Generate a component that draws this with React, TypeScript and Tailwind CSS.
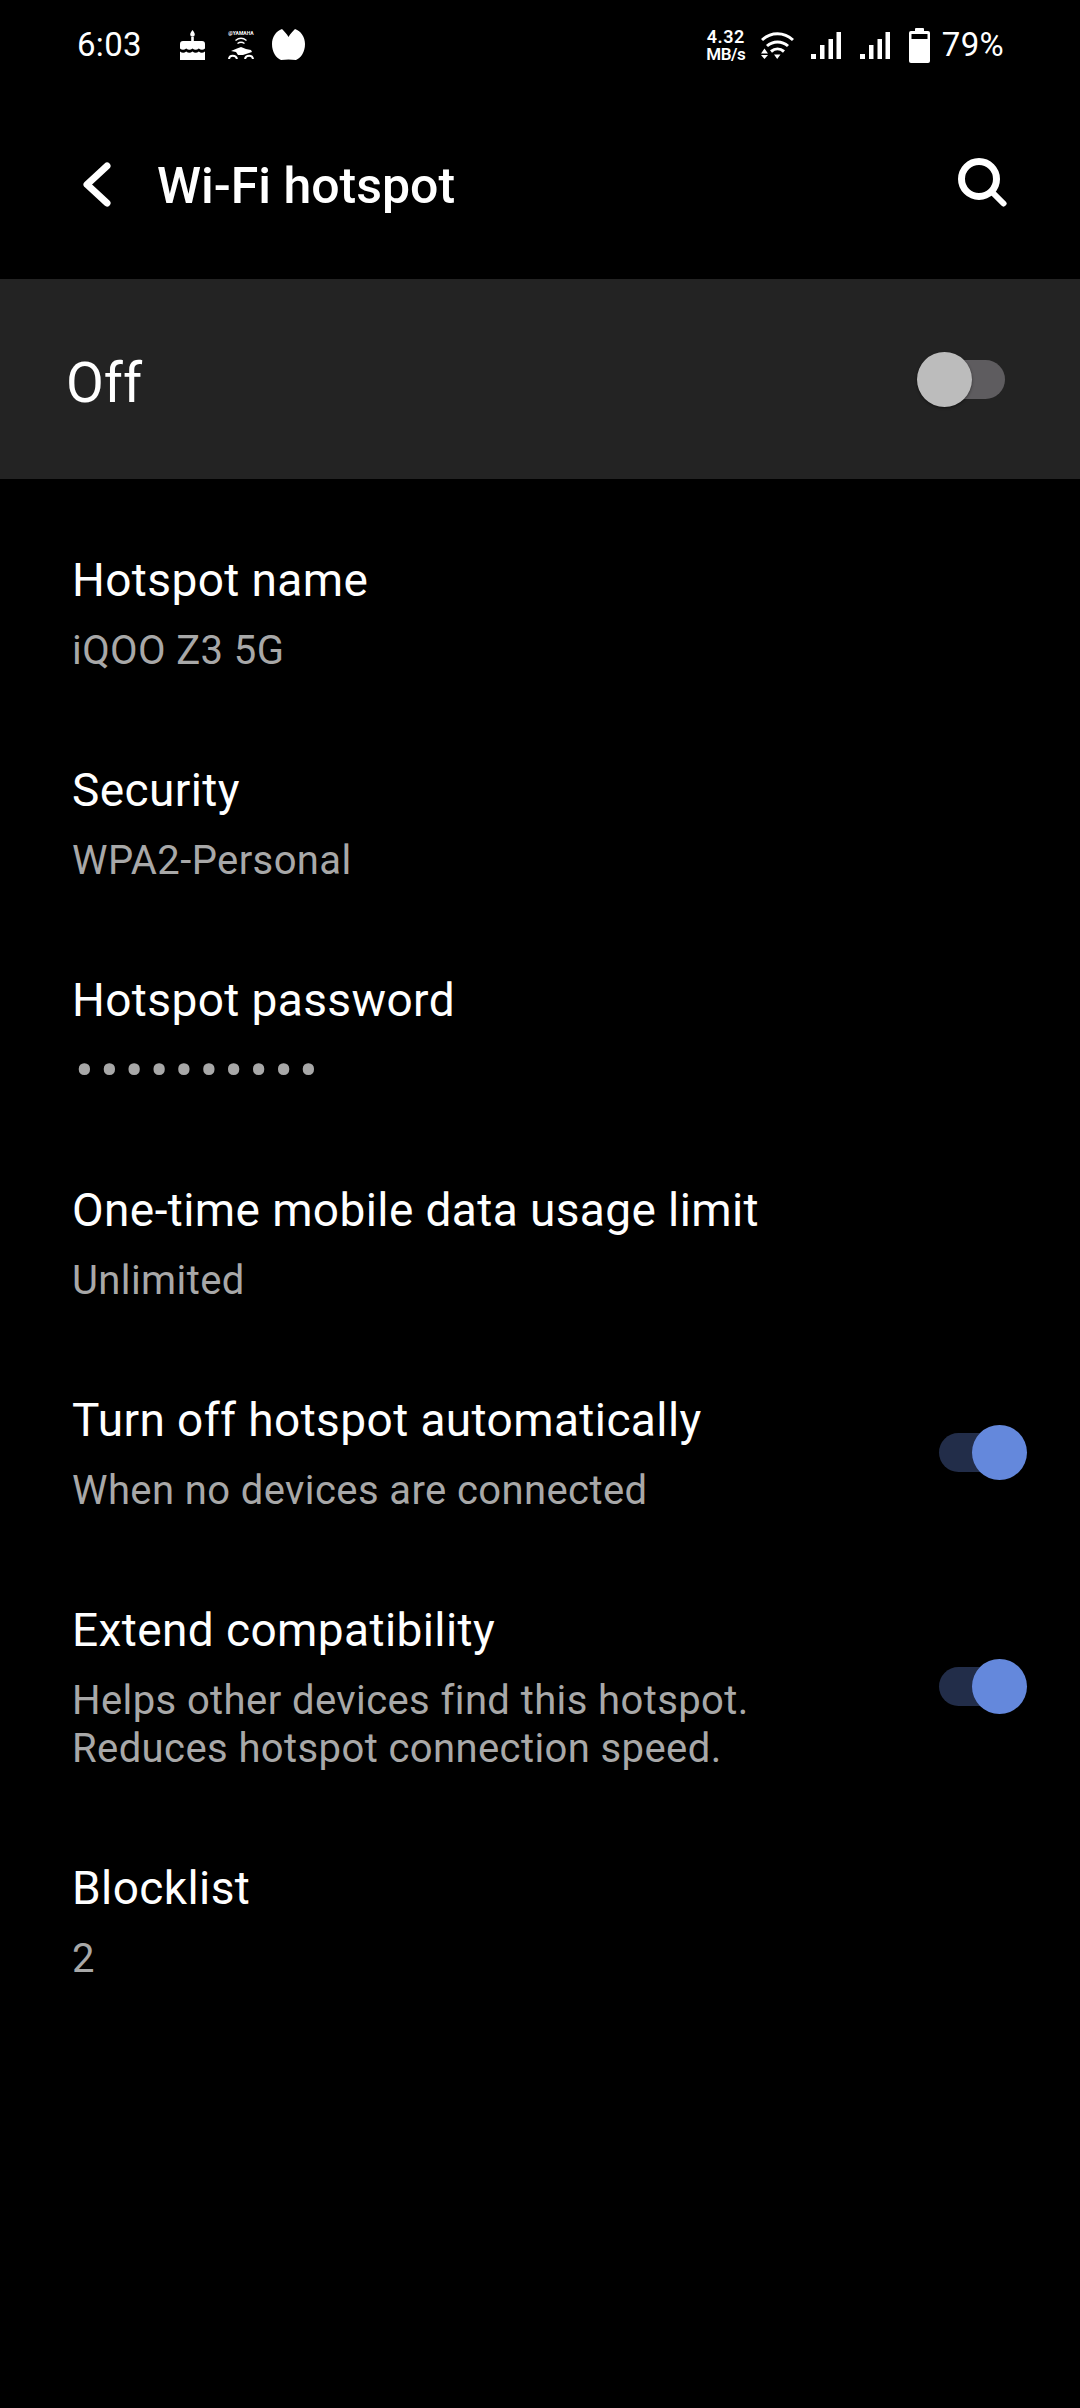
import { ReactNode } from 'react';

function Toggle({ on }: { on: boolean }) {
  return (
    <div className={`relative h-[39px] w-[66px] rounded-full ${on ? 'bg-[#222d49]' : 'bg-[#5e5c5f]'}`}>
      <div
        className={`absolute top-[-8px] h-[55px] w-[55px] rounded-full ${
          on ? 'right-[-22px] bg-[#6488dc]' : 'left-[-22px] bg-[#bcbcbc] shadow-sm shadow-black/40'
        }`}
      />
    </div>
  );
}

function Row({ title, children, toggle }: { title: string; children: ReactNode; toggle?: boolean }) {
  return (
    <div className="flex items-center justify-between pl-[72px] pr-[75px] pt-[43px] pb-[42px]">
      <div>
        <div className="text-[46px] leading-[60px] tracking-[0.4px] text-white">{title}</div>
        <div className="mt-[17px] text-[40px] leading-[48px] tracking-[0.4px] text-[#a8a8a8]">{children}</div>
      </div>
      {toggle ? <Toggle on /> : null}
    </div>
  );
}

function Signal() {
  return (
    <svg width="30" height="27" viewBox="0 0 30 27" fill="white" className="mr-[19px]">
      <rect x="0" y="22" width="5" height="5" />
      <rect x="9" y="13" width="4.500" height="14" />
      <rect x="17.500" y="7" width="4.500" height="20" />
      <rect x="25.500" y="0" width="4.500" height="27" />
    </svg>
  );
}

function StatusBar() {
  return (
    <div className="flex h-[90px] items-center justify-between pl-[77px] pr-[76px] text-white">
      <div className="flex items-center">
        <span className="w-[103px] text-[33px] leading-[40px] tracking-[0.3px]">6:03</span>
        {/* cake */}
        <svg width="25" height="30" viewBox="0 0 25 30" fill="white" className="mr-[23px]">
          <path d="M12.500 0c1.400 1.800 2.300 3.100 2.300 4.500a2.300 2.300 0 0 1-4.600 0C10.200 3.100 11.100 1.800 12.500 0z" />
          <rect x="11.200" y="7" width="2.600" height="5" />
          <path d="M3 11h19a3 3 0 0 1 3 3v4.500c-2 1.800-4 1.800-6.200 0-2.200 1.800-4.200 1.800-6.300 0-2.100 1.800-4.100 1.800-6.300 0-2.200 1.800-4.200 1.800-6.200 0V14a3 3 0 0 1 3-3z" />
          <path d="M0 21.500c2.200 1.600 4.200 1.600 6.200 0 2.100 1.600 4.200 1.600 6.300 0 2.100 1.600 4.200 1.600 6.300 0 2 1.600 4 1.600 6.200 0V30H0z" />
        </svg>
        {/* yamaha */}
        <div className="mr-[18px] flex w-[26px] flex-col items-center">
          <span className="mb-[1px] whitespace-nowrap text-[5px] font-bold leading-[5px]">@YAMAHA</span>
          <svg width="26" height="22" viewBox="0 0 26 22" fill="none" stroke="white">
            <path d="M7.500 3.500c3.300-2.600 7.700-2.600 11 0M9.500 6.500c2.300-1.700 4.700-1.700 7 0" strokeWidth="1.400" />
            <path d="M9 11.500l4-1.500 5 2 5 1 1 2-9 3H10l-2-3-5-1z" fill="white" stroke="none" />
            <path d="M1 22c.3-4.500 7-4.500 8 0M17 22c.8-4.500 7.500-4.500 8 0" strokeWidth="2" />
          </svg>
        </div>
        {/* round logo */}
        <svg width="33" height="32" viewBox="0 0 33 32" fill="white">
          <path d="M10 0C12 2 15 5 16.500 8 18 5 21 2 23 0 29 2 33 8 33 15 33 23 29 29 24 31L16.500 30.500 9 31C4 29 0 23 0 15 0 8 4 2 10 0z" />
        </svg>
      </div>
      <div className="flex items-center">
        <div className="mr-[15px] flex w-[40px] flex-col items-center font-semibold">
          <span className="text-[18px] leading-[18px] tracking-[0.6px]">4.32</span>
          <span className="text-[17px] leading-[17px] tracking-[-0.4px]">MB/s</span>
        </div>
        {/* wifi */}
        <svg width="33" height="27" viewBox="0 0 33 27" fill="none" stroke="white" strokeWidth="3" className="mr-[17px]">
          <path d="M1 8c9-8.500 22-8.500 31 0M6 14c6-5.500 15-5.500 21 0M10 19.500c4-3.500 9-3.500 13 0" />
          <path d="M0 21.500 3.500 16.500 7 21.500zM0 23h7l-3.500 4zM13 22.500h6.500L16.200 27z" fill="white" stroke="none" />
        </svg>
        <Signal />
        <Signal />
        {/* battery */}
        <svg width="21" height="35" viewBox="0 0 21 35" fill="white" className="mr-[12px]">
          <rect x="6" y="0" width="9" height="4" rx="1" />
          <path d="M2 3h17a2 2 0 0 1 2 2v28a2 2 0 0 1-2 2H2a2 2 0 0 1-2-2V5a2 2 0 0 1 2-2z" />
          <rect x="2.500" y="6" width="16" height="5" fill="black" />
        </svg>
        <span className="text-[33px] leading-[40px] tracking-[0.3px]">79%</span>
      </div>
    </div>
  );
}

export default function App() {
  return (
    <div className="h-[2408px] w-[1080px] overflow-hidden bg-black font-['Roboto',sans-serif]">
      <StatusBar />

      <div className="flex h-[189px] items-center justify-between pl-[83px] pr-[73px]">
        <div className="flex items-center">
          <svg width="28" height="45" viewBox="0 0 28 45" fill="none" stroke="white" strokeWidth="7" strokeLinecap="round" strokeLinejoin="round">
            <path d="M24 4 4 22.500 24 41" />
          </svg>
          <span className="ml-[46px] mt-[2px] text-[50px] font-medium leading-[60px] text-white">Wi-Fi hotspot</span>
        </div>
        <svg width="49" height="49" viewBox="0 0 49 49" fill="none" stroke="white" strokeLinecap="round" className="mb-[4px]">
          <circle cx="21" cy="21" r="17.500" strokeWidth="7" />
          <path d="M35 35 45.500 45.500" strokeWidth="6" />
        </svg>
      </div>

      <div className="flex h-[200px] items-center justify-between bg-[#232323] pl-[66px] pr-[75px]">
        <span className="mt-[8px] text-[55px] leading-[64px] text-white">Off</span>
        <Toggle on={false} />
      </div>

      <div className="pt-[28px]">
        <Row title="Hotspot name">iQOO Z3 5G</Row>
        <Row title="Security">WPA2-Personal</Row>
        <Row title="Hotspot password">
          <span className="ml-[3px] block h-[48px] text-[56px] leading-[48px] tracking-[6px]">••••••••••</span>
        </Row>
        <Row title="One-time mobile data usage limit">Unlimited</Row>
        <Row title="Turn off hotspot automatically" toggle>
          When no devices are connected
        </Row>
        <Row title="Extend compatibility" toggle>
          Helps other devices find this hotspot.
          <br />
          Reduces hotspot connection speed.
        </Row>
        <Row title="Blocklist">2</Row>
      </div>
    </div>
  );
}
